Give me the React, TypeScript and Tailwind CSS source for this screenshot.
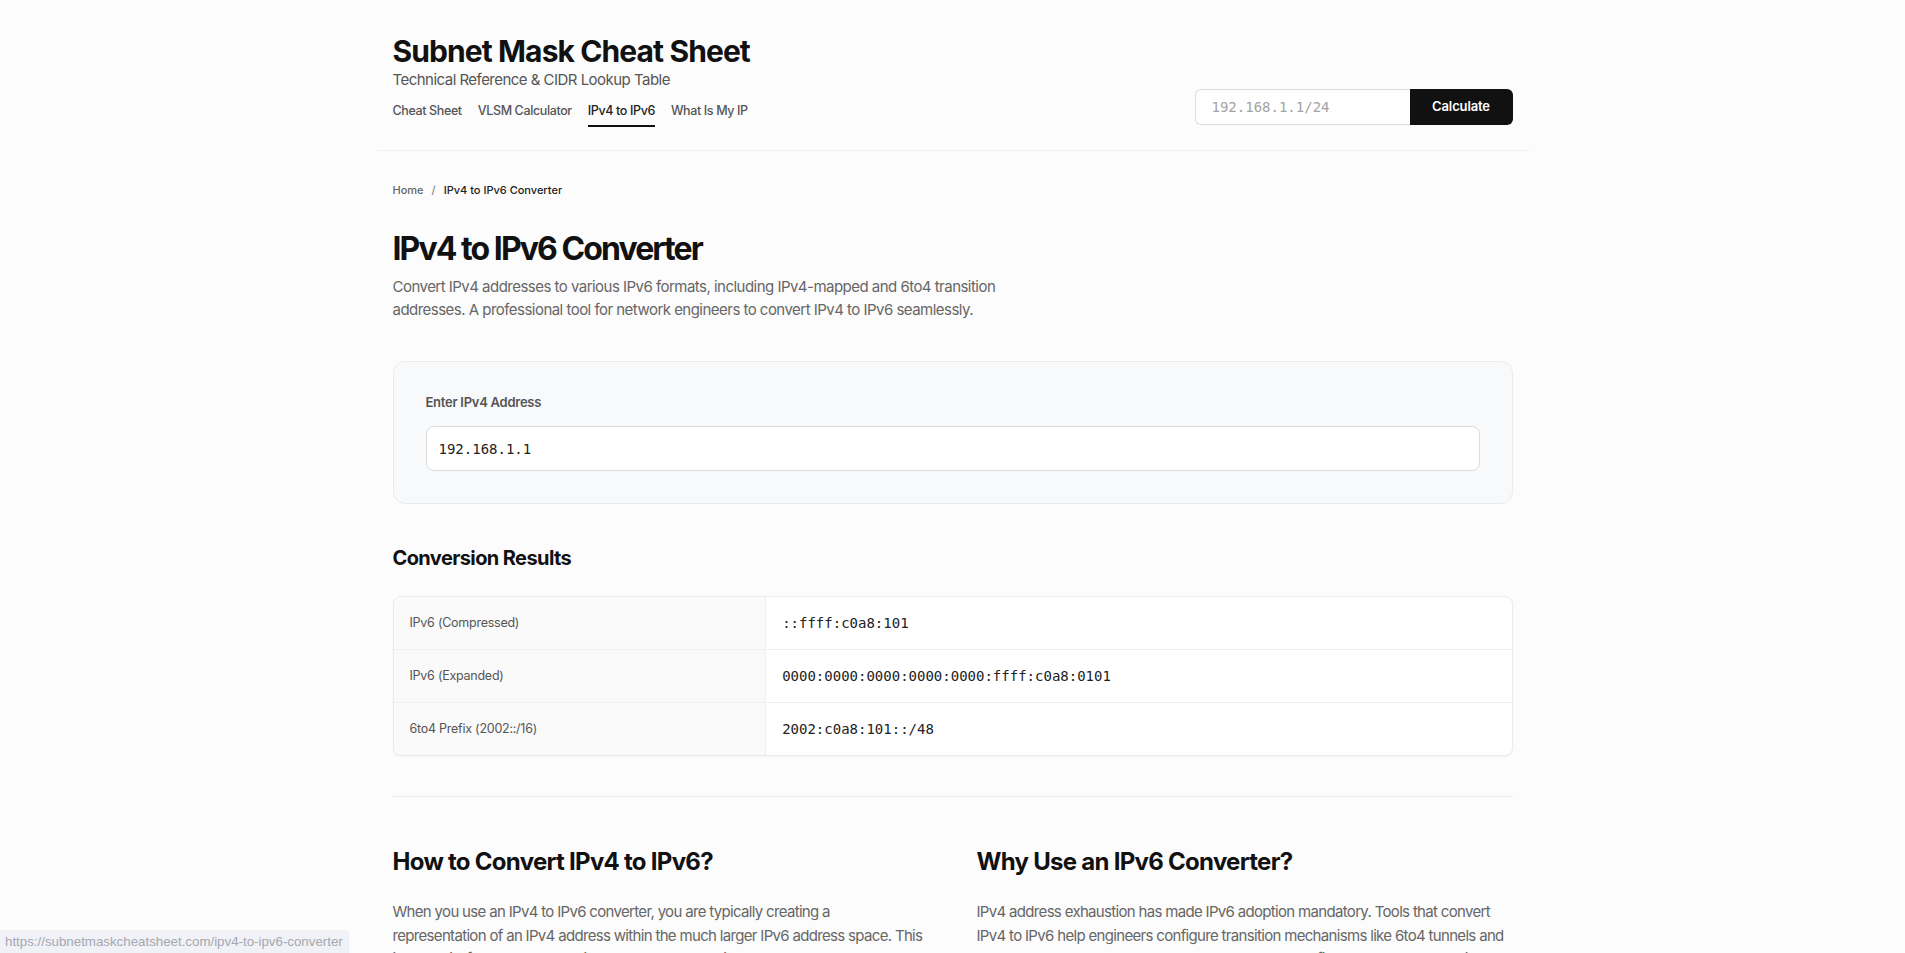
import React from "react";

const sans = "font-['Inter','Noto_Sans',sans-serif]";
const mono = "font-['DejaVu_Sans_Mono','Liberation_Mono',monospace]";

const navItems = [
  { label: "Cheat Sheet", active: false },
  { label: "VLSM Calculator", active: false },
  { label: "IPv4 to IPv6", active: true },
  { label: "What Is My IP", active: false },
];

const results = [
  { label: "IPv6 (Compressed)", value: "::ffff:c0a8:101" },
  { label: "IPv6 (Expanded)", value: "0000:0000:0000:0000:0000:ffff:c0a8:0101" },
  { label: "6to4 Prefix (2002::/16)", value: "2002:c0a8:101::/48" },
];

function Header() {
  return (
    <header className="mx-auto max-w-6xl border-b border-[#f0f0f0] px-4 pt-[33px] pb-[23px]">
      <div className="flex items-end justify-between">
        <div>
          <h1 className="text-[30px] leading-9 font-bold tracking-[-0.03em] text-[#111]">
            Subnet Mask Cheat Sheet
          </h1>
          <p className="text-[15px] leading-[22px] tracking-[-0.035em] text-[#555]">
            Technical Reference &amp; CIDR Lookup Table
          </p>
          <nav className="mt-2.5 flex gap-4">
            {navItems.map((item) => (
              <a
                key={item.label}
                href="#"
                className={
                  item.active
                    ? "border-b-2 border-[#111] pb-1 text-[12.5px] leading-5 font-medium tracking-[-0.03em] text-[#222]"
                    : "border-b-2 border-transparent pb-1 text-[12.5px] leading-5 font-medium tracking-[-0.03em] text-[#555]"
                }
              >
                {item.label}
              </a>
            ))}
          </nav>
        </div>
        <form className="mb-0.5 flex" onSubmit={(e) => e.preventDefault()}>
          <input
            type="text"
            placeholder="192.168.1.1/24"
            className={`${mono} h-[36px] w-[215px] rounded-l-md border border-r-0 border-[#dcdcdc] bg-white px-4 text-[14px] text-[#222] placeholder:text-[#a3a3a3] outline-none`}
          />
          <button
            type="submit"
            className="h-[36px] w-[103px] rounded-r-md bg-[#111] text-[13px] font-semibold tracking-[-0.01em] text-white"
          >
            Calculate
          </button>
        </form>
      </div>
    </header>
  );
}

export default function App() {
  return (
    <div className={`${sans} min-h-screen bg-[#fcfcfc] text-[#111]`}>
      <Header />
      <main className="mx-auto max-w-6xl px-4 pt-[31px] pb-16">
        <div className="mb-[31px] flex items-center gap-2 text-[11px] leading-4 font-medium">
          <a href="#" className="text-[#666]">Home</a>
          <span className="text-[#888]">/</span>
          <span className="text-[#222]">IPv4 to IPv6 Converter</span>
        </div>

        <h2 className="text-[32px] leading-10 font-bold tracking-[-0.06em] text-[#111]">
          IPv4 to IPv6 Converter
        </h2>
        <p className="mt-[6px] max-w-2xl text-[15px] leading-[23px] tracking-[-0.035em] text-[#666]">
          Convert IPv4 addresses to various IPv6 formats, including IPv4-mapped and 6to4 transition
          addresses. A professional tool for network engineers to convert IPv4 to IPv6 seamlessly.
        </p>

        <section className="mt-10 rounded-xl border border-[#ebebeb] bg-[#f8f9fb] p-8">
          <label className="block text-[13px] leading-4 font-semibold tracking-[-0.02em] text-[#555]">
            Enter IPv4 Address
          </label>
          <input
            type="text"
            defaultValue="192.168.1.1"
            className={`${mono} mt-4 h-[45px] w-full rounded-lg border border-[#dcdcdc] bg-white px-3 text-[14px] text-[#222] outline-none`}
          />
        </section>

        <h3 className="mt-10 text-[20px] leading-7 font-bold tracking-[-0.03em] text-[#111]">
          Conversion Results
        </h3>
        <div className="mt-6 overflow-hidden rounded-lg border border-[#ebebeb] bg-white shadow-[0_1px_2px_rgba(0,0,0,0.04)]">
          {results.map((row, i) => (
            <div
              key={row.label}
              className={i === 0 ? "flex" : "flex border-t border-[#f0f0f0]"}
            >
              <div className="w-1/3 border-r border-[#f0f0f0] bg-[#fafafa] px-4 py-4 text-[12.5px] leading-5 tracking-[-0.02em] text-[#555]">
                {row.label}
              </div>
              <div className={`${mono} flex-1 px-4 py-4 text-[14px] leading-5 text-[#222]`}>
                {row.value}
              </div>
            </div>
          ))}
        </div>

        <hr className="mt-10 border-[#ececec]" />

        <div className="mt-[49px] grid grid-cols-2 gap-12">
          <article>
            <h3 className="text-[24px] leading-8 font-bold tracking-[-0.03em] text-[#111]">
              How to Convert IPv4 to IPv6?
            </h3>
            <p className="mt-[22px] text-[15px] leading-[23.5px] tracking-[-0.045em] text-[#666]">
              When you use an IPv4 to IPv6 converter, you are typically creating a
              <br />
              representation of an IPv4 address within the much larger IPv6 address space. This
              <br />
              is essential for dual-stack environments, where devices must understand both
              protocols, and for transition tunnels that carry IPv4 traffic across IPv6 networks.
            </p>
          </article>
          <article>
            <h3 className="text-[24px] leading-8 font-bold tracking-[-0.03em] text-[#111]">
              Why Use an IPv6 Converter?
            </h3>
            <p className="mt-[22px] text-[15px] leading-[23.5px] tracking-[-0.045em] text-[#666]">
              IPv4 address exhaustion has made IPv6 adoption mandatory. Tools that convert
              <br />
              IPv4 to IPv6 help engineers configure transition mechanisms like 6to4 tunnels and
              <br />
              IPv4-mapped IPv6 addresses on dual-stack routers, firewalls and servers without
              manual hex math.
            </p>
          </article>
        </div>
      </main>

      {/* link preview bubble in the bottom-left corner */}
      <div className="fixed bottom-0 left-0 h-[23px] w-[349px] rounded-tr-sm bg-[#f1f2f7] px-[5px] font-['Liberation_Sans',sans-serif] text-[13.3px] leading-[23px] whitespace-nowrap text-[#a4a7b0]">
        https://subnetmaskcheatsheet.com/ipv4-to-ipv6-converter
      </div>
    </div>
  );
}
